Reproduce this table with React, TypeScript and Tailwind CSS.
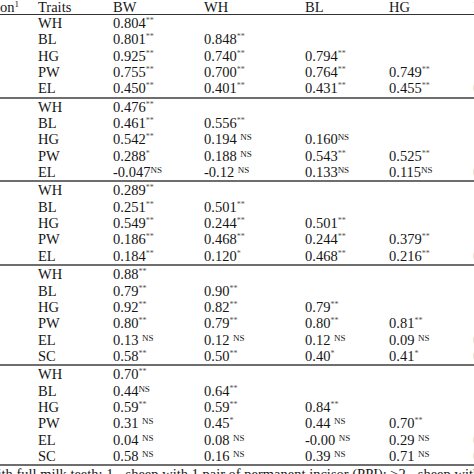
import React from "react";

type V = [string, string, boolean] | null;

const W = ["w-[38px]", "w-[75px]", "w-[91px]", "w-[101px]", "w-[84px]", "w-[83px]"];

function Val({ v }: { v: V }) {
  if (!v) return null;
  const [n, s, sp] = v;
  return (
    <span>
      {n}
      {sp ? " " : ""}
      <span className={s === "NS" ? "relative -top-[4px] text-[9px]" : "relative -top-[5px] text-[8px] text-[#555]"}>{s}</span>
    </span>
  );
}

const a = (n: string): V => [n, "**", false];
const b = (n: string): V => [n, "*", false];
const ns = (n: string): V => [n, "NS", false];
const nss = (n: string): V => [n, "NS", true];

type Row = [string, V[], boolean];

const blocks: Row[][] = [
  [
    ["WH", [a("0.804")], false],
    ["BL", [a("0.801"), a("0.848")], false],
    ["HG", [a("0.925"), a("0.740"), a("0.794")], false],
    ["PW", [a("0.755"), a("0.700"), a("0.764"), a("0.749")], false],
    ["EL", [a("0.450"), a("0.401"), a("0.431"), a("0.455")], true],
  ],
  [
    ["WH", [a("0.476")], false],
    ["BL", [a("0.461"), a("0.556")], false],
    ["HG", [a("0.542"), nss("0.194"), ns("0.160")], false],
    ["PW", [b("0.288"), nss("0.188"), a("0.543"), a("0.525")], false],
    ["EL", [ns("-0.047"), nss("-0.12"), ns("0.133"), ns("0.115")], true],
  ],
  [
    ["WH", [a("0.289")], false],
    ["BL", [a("0.251"), a("0.501")], false],
    ["HG", [a("0.549"), a("0.244"), a("0.501")], false],
    ["PW", [a("0.186"), a("0.468"), a("0.244"), a("0.379")], false],
    ["EL", [a("0.184"), b("0.120"), a("0.468"), a("0.216")], true],
  ],
  [
    ["WH", [a("0.88")], false],
    ["BL", [a("0.79"), a("0.90")], false],
    ["HG", [a("0.92"), a("0.82"), a("0.79")], false],
    ["PW", [a("0.80"), a("0.79"), a("0.80"), a("0.81")], false],
    ["EL", [nss("0.13"), nss("0.12"), nss("0.12"), nss("0.09")], true],
    ["SC", [a("0.58"), a("0.50"), b("0.40"), b("0.41")], true],
  ],
  [
    ["WH", [a("0.70")], false],
    ["BL", [ns("0.44"), a("0.64")], false],
    ["HG", [a("0.59"), a("0.59"), a("0.84")], false],
    ["PW", [nss("0.31"), b("0.45"), nss("0.44"), a("0.70")], false],
    ["EL", [nss("0.04"), nss("0.08"), nss("-0.00"), nss("0.29")], true],
    ["SC", [nss("0.58"), nss("0.16"), nss("0.39"), nss("0.71")], true],
  ],
];

export default function App() {
  return (
    <div
      className="w-[474px] h-[474px] overflow-hidden bg-white text-[#161616] text-[14.5px]"
      style={{ fontFamily: '"Liberation Serif", "Times New Roman", serif' }}
    >
      {/* header */}
      <div className="flex h-[14px] leading-[14px] whitespace-nowrap">
        <div className={`${W[0]} shrink-0 flex justify-end overflow-hidden pr-[19px]`}>
          <span>
            Region<span className="relative -top-[5px] text-[9px]">1</span>
          </span>
        </div>
        <div className={`${W[1]} shrink-0`}>Traits</div>
        <div className={`${W[2]} shrink-0`}>BW</div>
        <div className={`${W[3]} shrink-0`}>WH</div>
        <div className={`${W[4]} shrink-0`}>BL</div>
        <div className={`${W[5]} shrink-0`}>HG</div>
        <div className="shrink-0 pl-[1px] text-[#bbb]">PW</div>
      </div>
      <div className="h-px bg-[#333]" />
      {blocks.map((rows, bi) => (
        <div key={bi}>
          {rows.map(([t, vals, last], ri) => (
            <div key={ri} className="flex h-[16.35px] leading-[17px] whitespace-nowrap">
              <div className={`${W[0]} shrink-0`} />
              <div className={`${W[1]} shrink-0`}>{t}</div>
              {[0, 1, 2, 3].map((ci) => (
                <div key={ci} className={`${W[ci + 2]} shrink-0`}>
                  <Val v={vals[ci] ?? null} />
                </div>
              ))}
              {last && <div className="shrink-0 pl-[1px] text-[#bbb]">0.4</div>}
            </div>
          ))}
          <div className="h-[2px] bg-[#6e6e6e]" />
        </div>
      ))}
      <div className="whitespace-nowrap leading-[16px] ml-[-13px]">
        with full milk teeth; 1 - sheep with 1 pair of permanent incisor (PPI); ≥2 - sheep with
      </div>
    </div>
  );
}
